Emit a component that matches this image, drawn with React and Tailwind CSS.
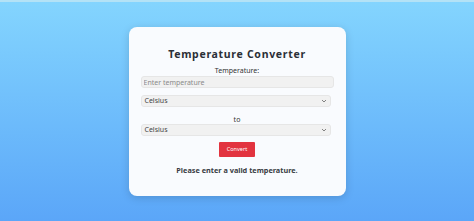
export default function App() {
  return (
    <div className="h-[221px] w-full bg-gradient-to-b from-[#84d5fe] to-[#5ba6f8] font-['Noto_Sans',sans-serif] relative">
      <div className="h-[2px] w-full bg-[#b3e2f6]"></div>
      <div className="flex justify-center pt-[25px]">
        <div className="w-[217px] h-[169px] bg-[#f9fbfe] rounded-[8px] shadow-[0_2px_8px_rgba(0,0,0,0.15)] px-[12px] pt-[20px] flex flex-col items-stretch">
          <h1 className="text-center text-[10.5px] leading-[15px] font-bold tracking-[0.7px] text-[#2b2f36]">
            Temperature Converter
          </h1>
          <label className="mt-[4px] text-center text-[7px] leading-[9px] text-[#333]">Temperature:</label>
          <input
            placeholder="Enter temperature"
            className="mt-[1px] h-[12px] w-full rounded-[3px] bg-[#f1f1f1] border border-[#e6e6e6] px-[2px] text-[7px] placeholder:text-[#8a8a8a] outline-none"
          />
          <div className="mt-[7px] mr-[3px] h-[12px] rounded-[3px] bg-[#f1f1f1] border border-[#e6e6e6] flex items-center justify-between px-[3px] text-[7px] text-[#444]">
            <span>Celsius</span>
            <svg width="6" height="4" viewBox="0 0 6 4"><path d="M1 1l2 2 2-2" stroke="#666" strokeWidth="0.8" fill="none" /></svg>
          </div>
          <div className="mt-[8px] text-center text-[7px] leading-[9px] text-[#333]">to</div>
          <div className="mt-[0px] mr-[3px] h-[12px] rounded-[3px] bg-[#f1f1f1] border border-[#e6e6e6] flex items-center justify-between px-[3px] text-[7px] text-[#444]">
            <span>Celsius</span>
            <svg width="6" height="4" viewBox="0 0 6 4"><path d="M1 1l2 2 2-2" stroke="#666" strokeWidth="0.8" fill="none" /></svg>
          </div>
          <div className="mt-[6px] flex justify-center">
            <button className="w-[36px] h-[15px] bg-[#e2333f] text-white text-[5.5px] rounded-[1px]">Convert</button>
          </div>
          <p className="mt-[7px] text-center text-[7.3px] leading-[12px] font-bold text-[#3a3d44]">
            Please enter a valid temperature.
          </p>
        </div>
      </div>
    </div>
  );
}
